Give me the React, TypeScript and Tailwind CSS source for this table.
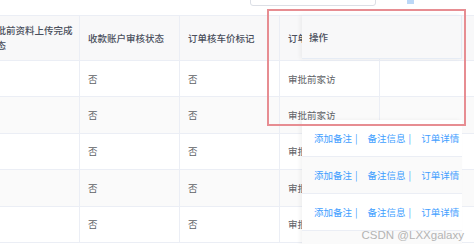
import React from 'react';

const rows = [0, 1, 2, 3, 4];
const fixedRows = [0, 1, 2, 3];

const App: React.FC = () => {
  return (
    <div className="relative w-[474px] h-[244px] overflow-hidden bg-white font-['Noto_Sans_CJK_SC',sans-serif] text-[9.5px]">
      {/* form bar above table */}
      <div className="flex h-[15px] items-start overflow-hidden">
        <div className="ml-[250px] mt-[-18px] h-[24px] w-[126px] rounded-[3px] border border-[#dcdfe6]" />
        <div className="ml-[31px] h-[4px] w-[7px] bg-[#bcd8f7]" />
      </div>

      {/* main table, scrolled a bit left */}
      <div className="ml-[-21px] w-[495px] border-t border-b border-[#ebeef5]">
        <div className="grid h-[44px] grid-cols-[101px_100px_100px_100px_1fr] bg-[#f8f8f9] font-medium text-[#4a4f5c]">
          <div className="flex flex-col justify-center overflow-hidden whitespace-nowrap border-r border-[#ebeef5] px-2 leading-[15px]">
            <span>审批前资料上传完成</span>
            <span>状态</span>
          </div>
          <div className="flex items-center whitespace-nowrap border-r border-[#ebeef5] px-2">收款账户审核状态</div>
          <div className="flex items-center whitespace-nowrap border-r border-[#ebeef5] px-2">订单核车价标记</div>
          <div className="flex items-center whitespace-nowrap border-r border-[#ebeef5] px-2">订单状态</div>
          <div className="flex items-center px-2" />
        </div>
        {rows.map((r) => (
          <div
            key={r}
            className={`grid h-[36.4px] grid-cols-[101px_100px_100px_100px_1fr] border-t border-[#ebeef5] text-[#606266] ${
              r % 2 === 1 ? 'bg-[#fafafa]' : 'bg-white'
            }`}
          >
            <div className="border-r border-[#ebeef5]" />
            <div className="flex items-center border-r border-[#ebeef5] px-2">否</div>
            <div className="flex items-center border-r border-[#ebeef5] px-2">否</div>
            <div className="flex items-center whitespace-nowrap border-r border-[#ebeef5] px-2">审批前家访</div>
            <div />
          </div>
        ))}
      </div>

      {/* fixed right column header */}
      <div className="absolute left-[302px] top-[15px] flex h-[44px] w-[160px] items-center border-t border-b border-r border-[#e6ecf5] bg-[#f8f8f9] px-[7px] font-medium text-[#4a4f5c] shadow-[-2px_0_4px_rgba(0,0,0,0.05)]">
        操作
      </div>

      {/* fixed right column body (misaligned) */}
      <div className="absolute left-[302px] top-[120px] w-[160px] shadow-[-2px_0_4px_rgba(0,0,0,0.05)]">
        {fixedRows.map((r) => (
          <div
            key={r}
            className={`flex h-[37px] items-center whitespace-nowrap border-b border-[#ebeef5] pl-[12px] text-[#409eff] ${
              r % 2 === 1 ? 'bg-[#fafafa]' : 'bg-white'
            }`}
          >
            <span>添加备注</span>
            <span className="ml-[3px]">|</span>
            <span className="ml-[10px]">备注信息</span>
            <span className="ml-[3px]">|</span>
            <span className="ml-[10px]">订单详情</span>
          </div>
        ))}
      </div>

      {/* red highlight box */}
      <div className="absolute left-[267px] top-[9px] h-[117px] w-[199px] border-2 border-[#e78d92]" />

      {/* watermark */}
      <div className="absolute right-[10px] top-[227px] font-['Liberation_Sans',sans-serif] text-[11.5px] text-[#b4b4b4]">
        CSDN @LXXgalaxy
      </div>
    </div>
  );
};

export default App;
